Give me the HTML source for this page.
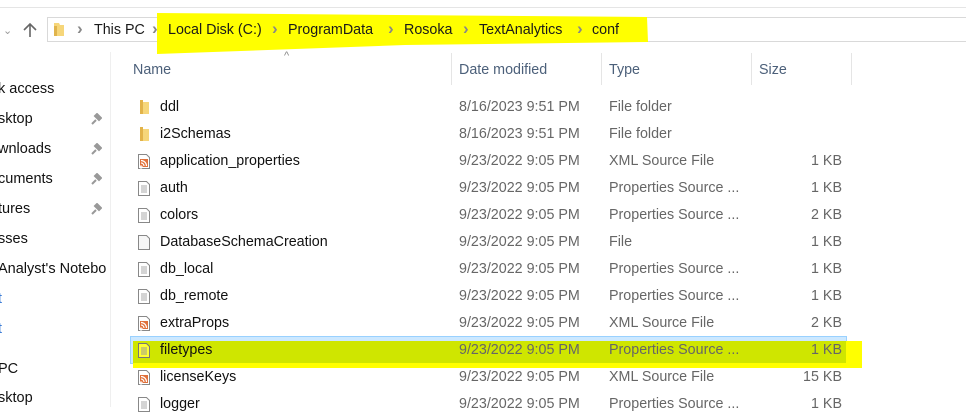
<!DOCTYPE html>
<html><head><style>
body{margin:0;width:966px;height:407px;overflow:hidden;background:#fff;font-family:"Liberation Sans",sans-serif;font-size:14.3px;color:#1a1a1a;position:relative}
.a{position:absolute;white-space:nowrap}
.nav{left:-2px;color:#111;font-size:14.5px}
.ch{color:#888;font-size:17px;font-weight:bold}
.r{position:absolute;left:0;width:966px;height:27px}
.r span{position:absolute;top:5px;white-space:nowrap}
.n{left:160px;color:#111}
.d{left:459px;color:#666}
.t{left:609px;color:#666}
.s{right:124px;color:#666}
.ic{position:absolute;left:137px;top:5px}
.pin{position:absolute;left:90px;width:12px;height:12px}
</style></head><body>
<div class="a" style="left:0;top:7px;width:966px;height:1px;background:#e5e5e5"></div>
<div class="a" style="left:3px;top:24px;color:#999;font-size:11px">&#8964;</div>
<svg class="a" style="left:23px;top:22px" width="14" height="16"><path d="M7 15V2M1 8L7 2L13 8" stroke="#666" stroke-width="1.6" fill="none"/></svg>
<div class="a" style="left:47px;top:17px;width:925px;height:25px;border:1px solid #d9d9d9;box-sizing:border-box"></div>
<svg class="a" style="left:155px;top:13px" width="500" height="42"><path d="M2 0L492 4L493 29L250 32L2 41Z" fill="#ffff00"/></svg>
<svg class="a" style="left:52px;top:21px" width="14" height="16"><path d="M2 2h5l1 2h4v11H2z" fill="#f6d67a"/><path d="M2 5h3v10H2z" fill="#e0b44c"/></svg>
<div class="a ch" style="top:19px;left:77px">›</div>
<div class="a" style="top:22px;left:94px">This PC</div>
<div class="a ch" style="top:19px;left:152px">›</div>
<div class="a" style="top:22px;left:168px">Local Disk (C:)</div>
<div class="a ch" style="top:19px;left:272px">›</div>
<div class="a" style="top:22px;left:288px">ProgramData</div>
<div class="a ch" style="top:19px;left:388px">›</div>
<div class="a" style="top:22px;left:404px">Rosoka</div>
<div class="a ch" style="top:19px;left:463px">›</div>
<div class="a" style="top:22px;left:479px">TextAnalytics</div>
<div class="a ch" style="top:19px;left:577px">›</div>
<div class="a" style="top:22px;left:592px">conf</div>

<div class="a" style="left:110px;top:52px;width:1px;height:355px;background:#efefef"></div>
<div class="a nav" style="top:81px">k access</div>
<div class="a nav" style="top:111px">sktop</div>
<div class="a nav" style="top:141px">wnloads</div>
<div class="a nav" style="top:171px">cuments</div>
<div class="a nav" style="top:201px">tures</div>
<div class="a nav" style="top:231px">sses</div>
<div class="a nav" style="top:261px">Analyst's Notebo</div>
<div class="a" style="top:291px;left:-2px;color:#3a7bd5">t</div>
<div class="a" style="top:321px;left:-2px;color:#3a7bd5">t</div>
<div class="a nav" style="top:361px">PC</div>
<div class="a nav" style="top:390px">sktop</div>
<svg class="pin" style="top:113px"><path d="M2 11L6 7M5 3L9 7L11 5L7 1Z" stroke="#999" stroke-width="2" fill="#999"/></svg>
<svg class="pin" style="top:143px"><path d="M2 11L6 7M5 3L9 7L11 5L7 1Z" stroke="#999" stroke-width="2" fill="#999"/></svg>
<svg class="pin" style="top:173px"><path d="M2 11L6 7M5 3L9 7L11 5L7 1Z" stroke="#999" stroke-width="2" fill="#999"/></svg>
<svg class="pin" style="top:203px"><path d="M2 11L6 7M5 3L9 7L11 5L7 1Z" stroke="#999" stroke-width="2" fill="#999"/></svg>

<div class="a" style="left:284px;top:50px;color:#888;font-size:11px">^</div>
<div class="a" style="left:133px;top:62px;color:#4c607a">Name</div>
<div class="a" style="left:459px;top:62px;color:#4c607a">Date modified</div>
<div class="a" style="left:609px;top:62px;color:#4c607a">Type</div>
<div class="a" style="left:759px;top:62px;color:#4c607a">Size</div>
<div class="a" style="left:451px;top:53px;width:1px;height:32px;background:#e5e5e5"></div>
<div class="a" style="left:601px;top:53px;width:1px;height:32px;background:#e5e5e5"></div>
<div class="a" style="left:751px;top:53px;width:1px;height:32px;background:#e5e5e5"></div>
<div class="a" style="left:851px;top:53px;width:1px;height:32px;background:#e5e5e5"></div>

<div class="a" style="left:130px;top:336px;width:717px;height:28px;background:#cce8ff;border:1px solid #99d1ff;box-sizing:border-box"></div>
<div class="a" style="left:133px;top:341px;width:729px;height:27px;background:#ffff00"></div>
<div class="a" style="left:133px;top:341px;width:713px;height:22px;background:#cfe600"></div>

<div id="rows"></div>
<script>
var F='<svg class="ic" width="14" height="16"><path d="M3 1h3v2h6v12H3z" fill="#f6d67a"/><path d="M3 1h3v14H3z" fill="#e2b34a"/></svg>';
var X='<svg class="ic" width="14" height="17"><path d="M1.5 1.5h8l3 3v11h-11z" fill="#fff" stroke="#888"/><rect x="3" y="6" width="8" height="8" fill="#e0703a"/><path d="M4 13a1 1 0 1 0 .1 0M4 10a3 3 0 0 1 3 3M4 7.5a5.5 5.5 0 0 1 5.5 5.5" stroke="#fff" stroke-width="1.2" fill="none"/></svg>';
var P='<svg class="ic" width="14" height="17"><path d="M1.5 1.5h8l3 3v11h-11z" fill="#fff" stroke="#888"/><path d="M4 6h6M4 8h6M4 10h6M4 12h6" stroke="#aaa"/></svg>';
var Y='<svg class="ic" width="14" height="17"><path d="M1.5 1.5h8l3 3v11h-11z" fill="#ffff33" stroke="#777"/><path d="M4 6h6M4 8h6M4 10h6M4 12h6" stroke="#999"/></svg>';
var B='<svg class="ic" width="14" height="17"><path d="M1.5 1.5h8l3 3v11h-11z" fill="#f6f6f6" stroke="#888"/></svg>';
var rows=[[F,'ddl','8/16/2023 9:51 PM','File folder',''],[F,'i2Schemas','8/16/2023 9:51 PM','File folder',''],
[X,'application_properties','9/23/2022 9:05 PM','XML Source File','1 KB'],[P,'auth','9/23/2022 9:05 PM','Properties Source ...','1 KB'],
[P,'colors','9/23/2022 9:05 PM','Properties Source ...','2 KB'],[B,'DatabaseSchemaCreation','9/23/2022 9:05 PM','File','1 KB'],
[P,'db_local','9/23/2022 9:05 PM','Properties Source ...','1 KB'],[P,'db_remote','9/23/2022 9:05 PM','Properties Source ...','1 KB'],
[X,'extraProps','9/23/2022 9:05 PM','XML Source File','2 KB'],[Y,'filetypes','9/23/2022 9:05 PM','Properties Source ...','1 KB'],
[X,'licenseKeys','9/23/2022 9:05 PM','XML Source File','15 KB'],[P,'logger','9/23/2022 9:05 PM','Properties Source ...','1 KB']];
var h='';rows.forEach(function(r,i){h+='<div class="r" style="top:'+(94+i*27)+'px">'+r[0]+'<span class="n">'+r[1]+'</span><span class="d">'+r[2]+'</span><span class="t">'+r[3]+'</span><span class="s">'+r[4]+'</span></div>';});
document.getElementById('rows').innerHTML=h;
</script>
</body></html>
